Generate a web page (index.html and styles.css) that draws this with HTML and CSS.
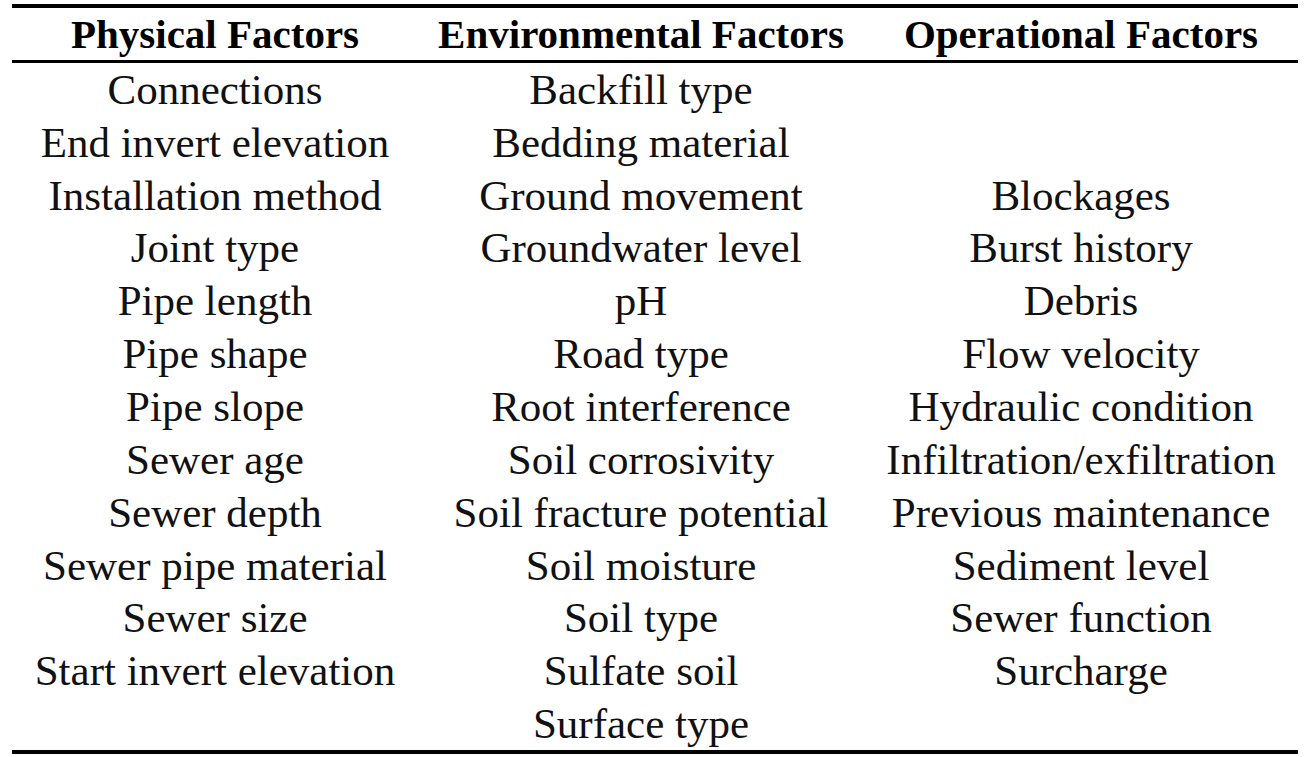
FILE: index.html
```html
<!DOCTYPE html>
<html>
<head>
<meta charset="utf-8">
<link rel="stylesheet" href="styles.css">
</head>
<body>
<table class="factors">
  <thead>
    <tr><th class="c1">Physical Factors</th><th class="c2">Environmental Factors</th><th class="c3">Operational Factors</th></tr>
  </thead>
  <tbody>
    <tr><td>Connections</td><td>Backfill type</td><td></td></tr>
    <tr><td>End invert elevation</td><td>Bedding material</td><td></td></tr>
    <tr><td>Installation method</td><td>Ground movement</td><td>Blockages</td></tr>
    <tr><td>Joint type</td><td>Groundwater level</td><td>Burst history</td></tr>
    <tr><td>Pipe length</td><td>pH</td><td>Debris</td></tr>
    <tr><td>Pipe shape</td><td>Road type</td><td>Flow velocity</td></tr>
    <tr><td>Pipe slope</td><td>Root interference</td><td>Hydraulic condition</td></tr>
    <tr><td>Sewer age</td><td>Soil corrosivity</td><td>Infiltration/exfiltration</td></tr>
    <tr><td>Sewer depth</td><td>Soil fracture potential</td><td>Previous maintenance</td></tr>
    <tr><td>Sewer pipe material</td><td>Soil moisture</td><td>Sediment level</td></tr>
    <tr><td>Sewer size</td><td>Soil type</td><td>Sewer function</td></tr>
    <tr><td>Start invert elevation</td><td>Sulfate soil</td><td>Surcharge</td></tr>
    <tr><td></td><td>Surface type</td><td></td></tr>
  </tbody>
</table>
</body>
</html>
```
FILE: styles.css
```css
html, body {
  margin: 0;
  padding: 0;
  background: #fff;
}
body {
  padding: 4px 0 0 12px;
  font-family: "Liberation Serif", "Times New Roman", serif;
  color: #000;
}
.factors {
  border-collapse: collapse;
  table-layout: fixed;
  width: 1286px;
  border-top: 4px solid #000;
  border-bottom: 4px solid #000;
}
.factors th, .factors td {
  padding: 0;
  text-align: center;
  white-space: nowrap;
  vertical-align: middle;
}
.factors th {
  height: 52px;
  font-size: 41px;
  font-weight: bold;
  border-bottom: 3px solid #000;
}
.factors td {
  height: 52.85px;
  font-size: 43px;
  color: #111;
}
.c1 { width: 406px; }
.c2 { width: 446px; }
.c3 { width: 434px; }
```
